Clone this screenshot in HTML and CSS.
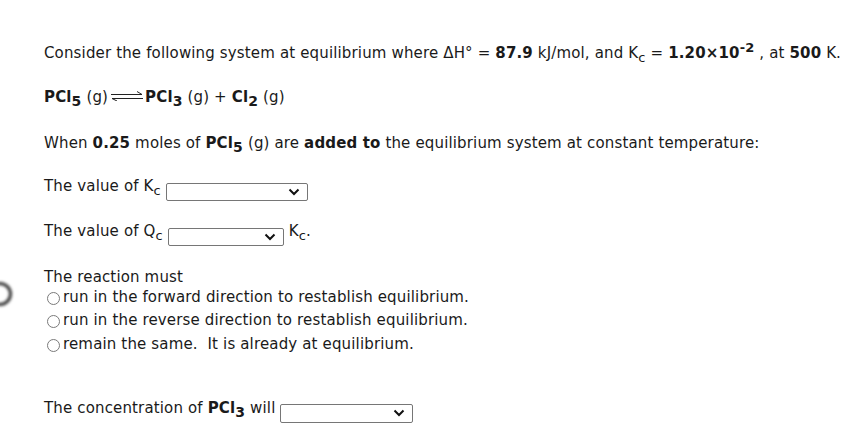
FILE: index.html
```html
<!DOCTYPE html>
<html>
<head>
<meta charset="utf-8">
<link rel="stylesheet" href="styles.css">
</head>
<body>
<div class="edge-blur"></div>
<div class="q">
  <div class="row r1">Consider the following system at equilibrium where ΔH° = <b>87.9</b> kJ/mol, and K<sub>c</sub> = <b>1.20×10<sup>-2</sup></b> , at <b>500</b> K.</div>
  <div class="row r2"><b>PCl<sub class="bs">5</sub></b> (g)<svg class="eq" width="34" height="10" viewBox="0 0 34 10"><path d="M1 3.5H32L27 0.5" fill="none" stroke="#222" stroke-width="1"/><path d="M33 7.5H2L7 10" fill="none" stroke="#222" stroke-width="1"/></svg><b>PCl<sub class="bs">3</sub></b> (g) + <b>Cl<sub class="bs">2</sub></b> (g)</div>
  <div class="row r3">When <b>0.25</b> moles of <b>PCl<sub class="bs">5</sub></b> (g) are <b>added to</b> the equilibrium system at constant temperature:</div>
  <div class="row r4">The value of K<sub>c</sub> <span class="sel w142"><svg class="chev" width="12" height="8" viewBox="0 0 12 8"><path d="M1.5 1.5L6 6L10.5 1.5" fill="none" stroke="#111" stroke-width="2"/></svg></span></div>
  <div class="row r5">The value of Q<sub>c</sub> <span class="sel w116"><svg class="chev" width="12" height="8" viewBox="0 0 12 8"><path d="M1.5 1.5L6 6L10.5 1.5" fill="none" stroke="#111" stroke-width="2"/></svg></span> K<sub>c</sub>.</div>
  <div class="row r6">The reaction must</div>
  <div class="radio r7"><span class="circ"></span>run in the forward direction to restablish equilibrium.</div>
  <div class="radio"><span class="circ"></span>run in the reverse direction to restablish equilibrium.</div>
  <div class="radio"><span class="circ"></span>remain the same.&nbsp; It is already at equilibrium.</div>
  <div class="row r8">The concentration of <b>PCl<sub class="bs">3</sub></b> will <span class="sel w133 h19"><svg class="chev" width="12" height="8" viewBox="0 0 12 8"><path d="M1.5 1.5L6 6L10.5 1.5" fill="none" stroke="#111" stroke-width="2"/></svg></span></div>
</div>
</body>
</html>
```
FILE: styles.css
```css
html, body {
  margin: 0;
  padding: 0;
  background: #fff;
}
body {
  font-family: "DejaVu Sans", Verdana, sans-serif;
  font-size: 15px;
  letter-spacing: 0.15px;
  color: #1a1a1a;
  position: relative;
  width: 868px;
  height: 439px;
  overflow: hidden;
}
.edge-blur {
  position: absolute;
  left: -12px;
  top: 282px;
  width: 18px;
  height: 18px;
  border-radius: 50%;
  border: 3px solid #333;
  filter: blur(1.5px);
}
.q {
  padding: 43px 0 0 44px;
  display: flex;
  flex-direction: column;
}
.row, .radio {
  height: 20px;
  line-height: 20px;
  white-space: nowrap;
}
b { font-weight: bold; }
sub {
  font-size: 13px;
  vertical-align: -4px;
  line-height: 0;
}
sub.bs { font-size: 14px; vertical-align: -4px; }
sup {
  font-size: 13px;
  vertical-align: 6px;
  line-height: 0;
}
.r2 { margin-top: 24px; }
.r3 { margin-top: 26px; }
.r4 { margin-top: 23px; }
.r5 { margin-top: 25px; }
.r6 { margin-top: 26px; }
.radio {
  height: 24px;
  line-height: 20px;
  padding-left: 3px;
  display: flex;
  align-items: flex-start;
}
.r7 { height: 23px; }
.circ {
  width: 11px;
  height: 11px;
  border: 1px solid #7a7a7a;
  border-radius: 50%;
  margin: 5px 3px 0 0;
  flex: none;
}
.r8 { margin-top: 40px; }
.eq {
  display: inline-block;
  vertical-align: 1px;
  margin: 0 1px 0 2px;
}
.sel {
  display: inline-block;
  box-sizing: border-box;
  height: 18px;
  border: 1px solid #767676;
  border-radius: 2px;
  vertical-align: -10px;
  position: relative;
  overflow: hidden;
  background: #fff;
}
.h19 { height: 19px; }
.w142 { width: 142px; }
.w116 { width: 116px; }
.w133 { width: 133px; }
.chev {
  position: absolute;
  right: 7px;
  top: 4px;
}
```
